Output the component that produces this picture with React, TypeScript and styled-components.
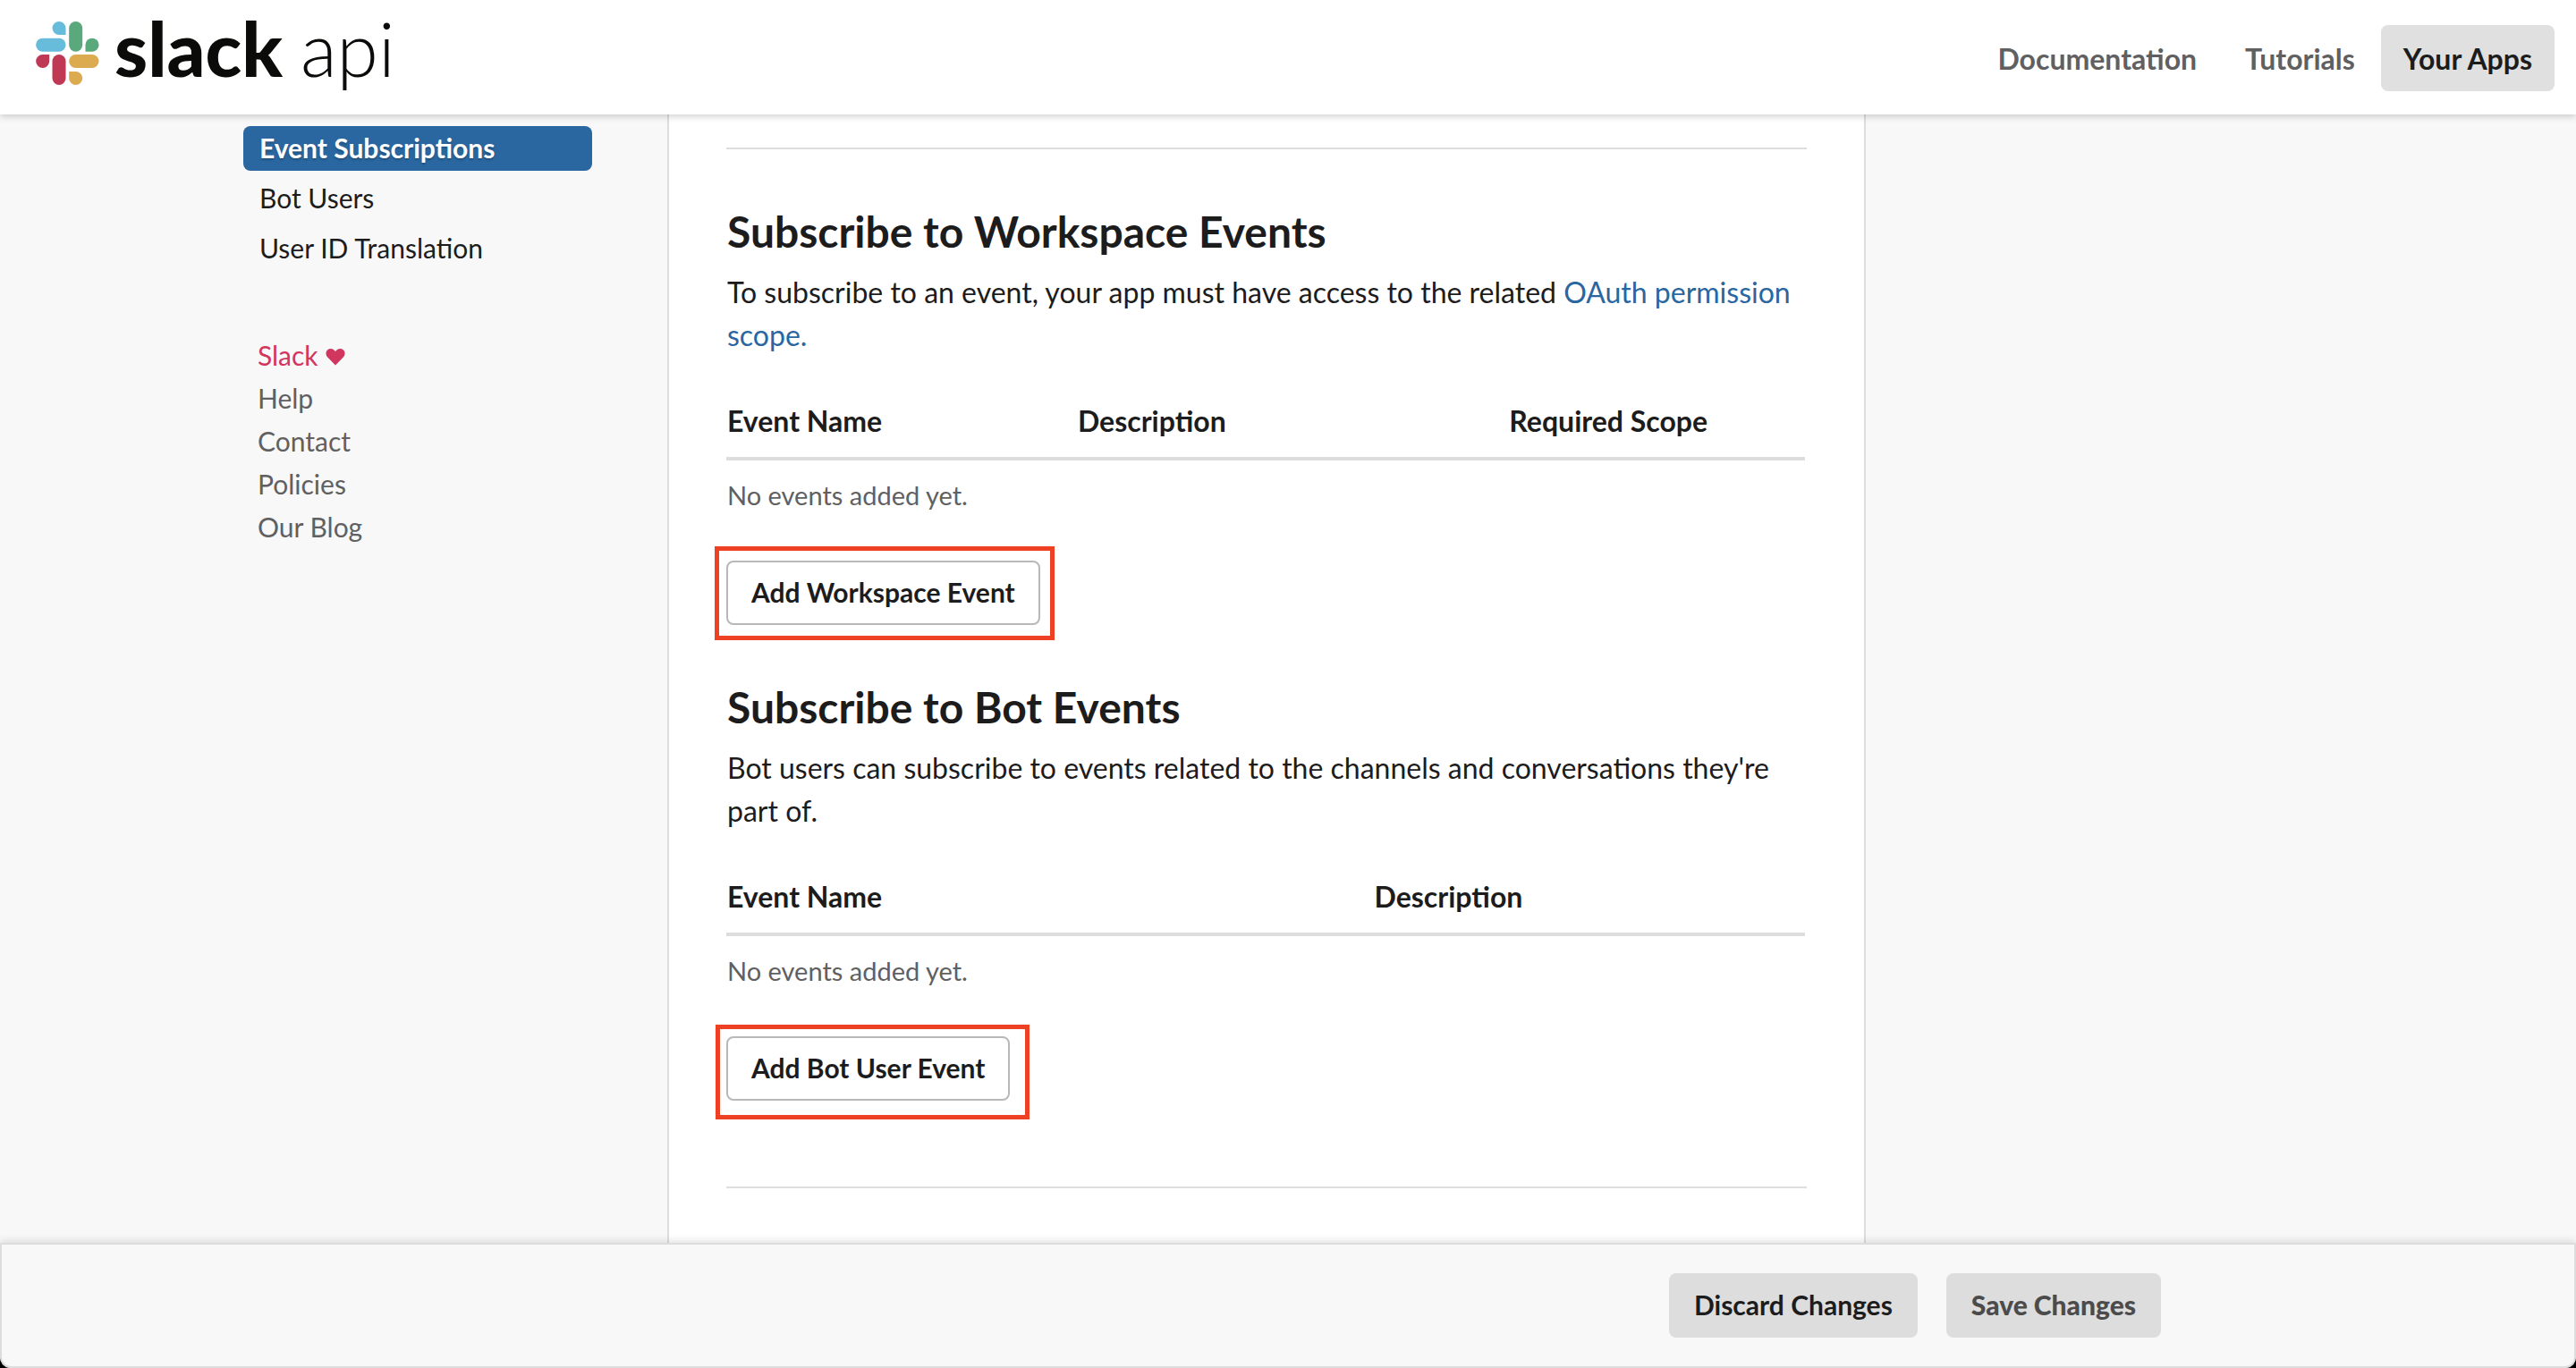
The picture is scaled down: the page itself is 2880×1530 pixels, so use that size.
import React from "react";
import styled, { createGlobalStyle, css } from "styled-components";

const colors = {
  ink: "#1d1c1d",
  muted: "#616061",
  link: "#2a669f",
  line: "#dddddd",
  surface: "#f8f8f8",
  pink: "#d1365e",
  marker: "#ee4023",
};

const GlobalStyle = createGlobalStyle`
  *, *::before, *::after { box-sizing: border-box; }
  html { background: #000; }
  body {
    margin: 0;
    font-family: Lato, "Noto Sans", sans-serif;
    font-size: 32px;
    line-height: 48px;
    color: ${colors.ink};
  }
  a { color: inherit; text-decoration: none; }
`;

const Page = styled.div`
  display: flex;
  flex-direction: column;
  min-height: 100vh;
  background: ${colors.surface};
  border-radius: 0 0 12px 12px;
  overflow: hidden;
`;

const Header = styled.header`
  display: flex;
  justify-content: space-between;
  align-items: center;
  height: 128px;
  padding: 0 24px 0 40px;
  background: #fff;
  box-shadow: 0 2px 8px rgba(0, 0, 0, 0.2);
  z-index: 1;
`;

const Brand = styled.a`
  display: flex;
  align-items: flex-start;
  gap: 17px;
  height: 80px;
  color: #0b0b09;
`;

const Wordmark = styled.span`
  font-size: 84px;
  line-height: 60px;
  font-weight: 900;
`;

const WordmarkLight = styled.span`
  font-weight: 300;
`;

const TopNav = styled.nav`
  display: flex;
  align-items: center;
  gap: 4px;
  padding-top: 2px;
`;

const TopLink = styled.a<{ $active?: boolean }>`
  padding: 14px 25px 12px;
  border-radius: 8px;
  font-weight: 700;
  color: ${(p) => (p.$active ? colors.ink : colors.muted)};
  background: ${(p) => (p.$active ? "#e0e0e0" : "transparent")};
`;

const Columns = styled.div`
  display: flex;
  flex: 1;
  gap: 84px;
  width: 100%;
  max-width: 2336px;
  margin: 0 auto;
`;

const Sidebar = styled.aside`
  display: flex;
  flex-direction: column;
  gap: 54px;
  width: 390px;
  padding-top: 13px;
`;

const SideNav = styled.nav`
  display: flex;
  flex-direction: column;
  gap: 6px;
`;

const SideLink = styled.a<{ $active?: boolean }>`
  padding: 0 18px 2px;
  border-radius: 8px;
  font-size: 30px;
  ${(p) =>
    p.$active &&
    css`
      color: #fff;
      font-weight: 700;
      background: ${colors.link};
      text-shadow: 0 2px 2px rgba(0, 0, 0, 0.2);
    `}
`;

const FooterNav = styled.nav`
  display: flex;
  flex-direction: column;
  padding: 16px;
`;

const FooterLink = styled.a<{ $brand?: boolean }>`
  display: flex;
  align-items: center;
  gap: 8px;
  font-size: 30px;
  color: ${(p) => (p.$brand ? colors.pink : colors.muted)};

  svg {
    margin-top: 4px;
  }
`;

const Panel = styled.main`
  flex: 0 1 1340px;
  padding: 37px 64px 0;
  background: #fff;
  border: solid ${colors.line};
  border-width: 0 2px;
`;

const Rule = styled.hr`
  height: 2px;
  margin: 0;
  border: 0;
  background: ${colors.line};
`;

const Section = styled.section`
  padding-top: 64px;
`;

const Title = styled.h2`
  margin: 0 0 16px;
  padding-left: 1px;
  font-size: 48px;
  line-height: 56px;
  font-weight: 700;
`;

const Intro = styled.p`
  margin: 0 0 32px;
  padding-left: 1px;
`;

const TextLink = styled.a`
  && {
    color: ${colors.link};
  }
`;

const EventTable = styled.table`
  width: calc(100% - 2px);
  table-layout: fixed;
  border-collapse: separate;
  border-spacing: 0;
  margin-bottom: 32px;
`;

const HeadCell = styled.th<{ $width: number }>`
  width: ${(p) => p.$width}%;
  padding: 16px 1px;
  border-bottom: 4px solid ${colors.line};
  text-align: left;
  font-weight: 700;
`;

const EmptyCell = styled.td`
  padding: 15px 1px 17px;
  font-size: 29px;
  color: ${colors.muted};
`;

const Marked = styled.div<{ $inset: string }>`
  position: relative;
  width: fit-content;

  &::after {
    content: "";
    position: absolute;
    inset: ${(p) => p.$inset};
    border: 5px solid ${colors.marker};
    pointer-events: none;
  }
`;

const Button = styled.button<{ $filled?: boolean }>`
  display: block;
  height: 72px;
  padding: 0 26px 3px;
  border: 2px solid ${(p) => (p.$filled ? colors.line : "#b8b8b8")};
  border-radius: 8px;
  background: ${(p) => (p.$filled ? colors.line : "#fff")};
  color: ${colors.ink};
  font-family: inherit;
  font-size: 30px;
  line-height: 48px;
  font-weight: 700;

  &:disabled {
    color: #4c4b4c;
    font-weight: 900;
  }
`;

const Closing = styled.div`
  padding-top: 96px;
`;

const ActionBar = styled.footer`
  display: flex;
  justify-content: flex-end;
  align-items: center;
  height: 140px;
  padding: 0 462px 0 0;
  border: 2px solid ${colors.line};
  border-radius: 0 0 12px 12px;
  background: ${colors.surface};
  box-shadow: 0 -2px 10px rgba(0, 0, 0, 0.12);
  gap: 32px;
  z-index: 1;
`;

function SlackMark() {
  return (
    <svg width="71" height="71" viewBox="122 72 212 213" aria-hidden="true">
      <g fill="#67bcdb">
        <path d="M222 117H199.500A22.500 22.500 0 1 1 222 94.500Z" />
        <rect x="122" y="128" width="100" height="45" rx="22.500" />
      </g>
      <g fill="#5aa97c">
        <rect x="233" y="72" width="45" height="101" rx="22.500" />
        <path d="M288 173V150.500A22.500 22.500 0 1 1 310.500 173Z" />
      </g>
      <g fill="#bf3955">
        <path d="M167 183V205.500A22.500 22.500 0 1 1 144.500 183Z" />
        <rect x="177" y="183" width="45" height="102" rx="22.500" />
      </g>
      <g fill="#dcaa4f">
        <rect x="233" y="183" width="100" height="45" rx="22.500" />
        <path d="M233 240H255.500A22.500 22.500 0 1 1 233 262.500Z" />
      </g>
    </svg>
  );
}

function Heart() {
  return (
    <svg width="22" height="20" viewBox="0 0 22 20" aria-hidden="true">
      <path
        fill="currentColor"
        d="M11 19.500 2.200 10.600C-.2 8 0 4.200 2.300 2.200 4.800 0 8.700.6 11 4.200 13.300.6 17.200 0 19.700 2.200 22 4.200 22.200 8 19.800 10.600Z"
      />
    </svg>
  );
}

type Column = { label: string; width: number };

type EventSectionProps = {
  title: string;
  intro: React.ReactNode;
  columns: Column[];
  action: string;
  markInset: string;
};

function EventSection({ title, intro, columns, action, markInset }: EventSectionProps) {
  return (
    <Section>
      <Title>{title}</Title>
      <Intro>{intro}</Intro>
      <EventTable>
        <thead>
          <tr>
            {columns.map((c) => (
              <HeadCell key={c.label} $width={c.width} scope="col">
                {c.label}
              </HeadCell>
            ))}
          </tr>
        </thead>
        <tbody>
          <tr>
            <EmptyCell colSpan={columns.length}>No events added yet.</EmptyCell>
          </tr>
        </tbody>
      </EventTable>
      <Marked $inset={markInset}>
        <Button type="button">{action}</Button>
      </Marked>
    </Section>
  );
}

export default function App() {
  return (
    <>
      <GlobalStyle />
      <Page>
        <Header>
          <Brand href="#">
            <SlackMark />
            <Wordmark>
              slack <WordmarkLight>api</WordmarkLight>
            </Wordmark>
          </Brand>
          <TopNav>
            <TopLink href="#">Documentation</TopLink>
            <TopLink href="#">Tutorials</TopLink>
            <TopLink href="#" $active>
              Your Apps
            </TopLink>
          </TopNav>
        </Header>

        <Columns>
          <Sidebar>
            <SideNav>
              <SideLink href="#" $active>
                Event Subscriptions
              </SideLink>
              <SideLink href="#">Bot Users</SideLink>
              <SideLink href="#">User ID Translation</SideLink>
            </SideNav>
            <FooterNav>
              <FooterLink href="#" $brand>
                Slack <Heart />
              </FooterLink>
              <FooterLink href="#">Help</FooterLink>
              <FooterLink href="#">Contact</FooterLink>
              <FooterLink href="#">Policies</FooterLink>
              <FooterLink href="#">Our Blog</FooterLink>
            </FooterNav>
          </Sidebar>

          <Panel>
            <Rule />
            <EventSection
              title="Subscribe to Workspace Events"
              intro={
                <>
                  To subscribe to an event, your app must have access to the related{" "}
                  <TextLink href="#">OAuth permission scope.</TextLink>
                </>
              }
              columns={[
                { label: "Event Name", width: 32.5 },
                { label: "Description", width: 40 },
                { label: "Required Scope", width: 27.5 },
              ]}
              action="Add Workspace Event"
              markInset="-16px -16px -17px -13px"
            />
            <EventSection
              title="Subscribe to Bot Events"
              intro="Bot users can subscribe to events related to the channels and conversations they're part of."
              columns={[
                { label: "Event Name", width: 60 },
                { label: "Description", width: 40 },
              ]}
              action="Add Bot User Event"
              markInset="-13px -22px -21px -12px"
            />
            <Closing>
              <Rule />
            </Closing>
          </Panel>
        </Columns>

        <ActionBar>
          <Button type="button" $filled>
            Discard Changes
          </Button>
          <Button type="button" $filled disabled>
            Save Changes
          </Button>
        </ActionBar>
      </Page>
    </>
  );
}
